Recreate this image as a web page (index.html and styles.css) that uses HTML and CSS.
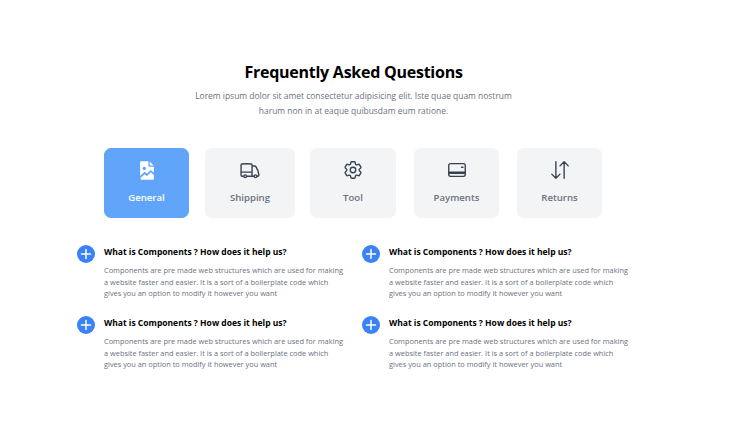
FILE: index.html
```html
<!DOCTYPE html>
<html lang="en">

<head>
    <meta charset="UTF-8">
    <meta name="viewport" content="width=device-width, initial-scale=1.0">
    <title>FAQ</title>
    <link rel="stylesheet" href="styles.css">
</head>

<body>
    <section class="faq">
        <h1>Frequently Asked Questions</h1>
        <p class="lead">Lorem ipsum dolor sit amet consectetur adipisicing elit. Iste quae quam nostrum harum non in at eaque quibusdam eum ratione.</p>

        <div class="tabs">
            <a class="tab active">
                <svg viewBox="0 0 24 24" class="icon" fill="#fff">
                    <path fill-rule="evenodd" d="M6 2.500h7.500v4.500a1.500 1.500 0 0 0 1.500 1.500h4.500V15l-3.500-3-4 4-2.500-2-5 4.500V3.500a1 1 0 0 1 1-1Zm3 6a1.800 1.800 0 1 0 0 3.600 1.800 1.800 0 0 0 0-3.600Z" />
                    <path d="M15 2.800 19.200 7H15.600a.6.6 0 0 1-.6-.6ZM5 20.500l4.500-4 2.600 2 4-4 3.400 3v4a1 1 0 0 1-1 1H6a1 1 0 0 1-1-1Z" />
                </svg>
                <span>General</span>
            </a>
            <a class="tab wide">
                <svg viewBox="0 0 24 24" class="icon" fill="none" stroke="currentColor" stroke-width="1.5" stroke-linecap="round" stroke-linejoin="round">
                    <path d="M8.250 18.750a1.500 1.500 0 0 1-3 0m3 0a1.500 1.500 0 0 0-3 0m3 0h6m-9 0H3.375a1.125 1.125 0 0 1-1.125-1.125V14.250m17.250 4.500a1.500 1.500 0 0 1-3 0m3 0a1.500 1.500 0 0 0-3 0m3 0h1.125c.621 0 1.129-.504 1.090-1.124a17.902 17.902 0 0 0-3.213-9.193 2.056 2.056 0 0 0-1.580-.86H14.250M16.500 18.750h-2.250m0-11.177v-.958c0-.568-.422-1.048-.987-1.106a48.554 48.554 0 0 0-10.026 0 1.106 1.106 0 0 0-.987 1.106v7.635m12-6.677v6.677m0 4.500v-4.500m0 0h-12" />
                </svg>
                <span>Shipping</span>
            </a>
            <a class="tab narrow">
                <svg viewBox="0 0 24 24" class="icon" fill="none" stroke="currentColor" stroke-width="1.5" stroke-linecap="round" stroke-linejoin="round">
                    <path d="M9.594 3.94c.09-.542.56-.94 1.11-.94h2.593c.55 0 1.02.398 1.11.94l.213 1.281c.063.374.313.686.645.87.074.04.147.083.22.127.325.196.72.257 1.075.124l1.217-.456a1.125 1.125 0 0 1 1.37.49l1.296 2.247a1.125 1.125 0 0 1-.26 1.431l-1.003.827c-.293.241-.438.613-.43.992a7.723 7.723 0 0 1 0 .255c-.008.378.137.75.43.991l1.004.827c.424.35.534.955.26 1.43l-1.298 2.247a1.125 1.125 0 0 1-1.369.491l-1.217-.456c-.355-.133-.75-.072-1.076.124a6.47 6.47 0 0 1-.22.128c-.331.183-.581.495-.644.869l-.213 1.281c-.09.543-.56.94-1.11.94h-2.594c-.55 0-1.019-.398-1.11-.94l-.213-1.281c-.062-.374-.312-.686-.644-.87a6.52 6.52 0 0 1-.22-.127c-.325-.196-.72-.257-1.076-.124l-1.217.456a1.125 1.125 0 0 1-1.369-.49l-1.297-2.247a1.125 1.125 0 0 1 .26-1.431l1.004-.827c.292-.24.437-.613.43-.991a6.932 6.932 0 0 1 0-.255c.007-.38-.138-.751-.43-.992l-1.004-.827a1.125 1.125 0 0 1-.26-1.43l1.297-2.247a1.125 1.125 0 0 1 1.37-.491l1.216.456c.356.133.751.072 1.076-.124.072-.044.146-.086.22-.128.332-.183.582-.495.644-.869l.214-1.28Z" />
                    <path d="M15 12a3 3 0 1 1-6 0 3 3 0 0 1 6 0Z" />
                </svg>
                <span>Tool</span>
            </a>
            <a class="tab">
                <svg viewBox="0 0 24 24" class="icon" fill="none" stroke="currentColor" stroke-width="1.5" stroke-linecap="round" stroke-linejoin="round">
                    <rect x="3" y="5" width="18" height="14" rx="2" />
                    <path d="M3 15.500h18M3 14.500h18M17 9h1.500" />
                </svg>
                <span>Payments</span>
            </a>
            <a class="tab">
                <svg viewBox="0 0 24 24" class="icon" fill="none" stroke="currentColor" stroke-width="1.5" stroke-linecap="round" stroke-linejoin="round">
                    <path d="M12 16.500 7.500 21m0 0L3 16.500M7.500 21V3M12 7.500 16.500 3m0 0L21 7.500M16.500 3v18" />
                </svg>
                <span>Returns</span>
            </a>
        </div>

        <div class="questions">
            <div class="question">
                <span class="plus"><svg viewBox="0 0 18 18" fill="none" stroke="#fff" stroke-width="1.5" stroke-linecap="round"><path d="M9 4.500v9M4.500 9h9" /></svg></span>
                <div>
                    <h2>What is Components ? How does it help us?</h2>
                    <p>Components are pre made web structures which are used for making a website faster and easier. It is a sort of a boilerplate code which gives you an option to modify it however you want</p>
                </div>
            </div>
            <div class="question">
                <span class="plus"><svg viewBox="0 0 18 18" fill="none" stroke="#fff" stroke-width="1.5" stroke-linecap="round"><path d="M9 4.500v9M4.500 9h9" /></svg></span>
                <div>
                    <h2>What is Components ? How does it help us?</h2>
                    <p>Components are pre made web structures which are used for making a website faster and easier. It is a sort of a boilerplate code which gives you an option to modify it however you want</p>
                </div>
            </div>
            <div class="question">
                <span class="plus"><svg viewBox="0 0 18 18" fill="none" stroke="#fff" stroke-width="1.5" stroke-linecap="round"><path d="M9 4.500v9M4.500 9h9" /></svg></span>
                <div>
                    <h2>What is Components ? How does it help us?</h2>
                    <p>Components are pre made web structures which are used for making a website faster and easier. It is a sort of a boilerplate code which gives you an option to modify it however you want</p>
                </div>
            </div>
            <div class="question">
                <span class="plus"><svg viewBox="0 0 18 18" fill="none" stroke="#fff" stroke-width="1.5" stroke-linecap="round"><path d="M9 4.500v9M4.500 9h9" /></svg></span>
                <div>
                    <h2>What is Components ? How does it help us?</h2>
                    <p>Components are pre made web structures which are used for making a website faster and easier. It is a sort of a boilerplate code which gives you an option to modify it however you want</p>
                </div>
            </div>
        </div>
    </section>
</body>

</html>
```
FILE: styles.css
```css
* {
    box-sizing: border-box;
}

body {
    margin: 0;
    background: #fff;
    font-family: "Open Sans", "Noto Sans", sans-serif;
}

.faq {
    width: 707px;
    padding-top: 60px;
}

h1 {
    margin: 0;
    text-align: center;
    font-size: 16px;
    line-height: 24px;
    font-weight: 700;
    letter-spacing: -0.25px;
    color: #000;
}

.lead {
    width: 330px;
    margin: 5px auto 0;
    text-align: center;
    font-size: 8.45px;
    line-height: 14.5px;
    color: #6b7280;
}

.tabs {
    display: flex;
    gap: 18px;
    margin: 30px 0 0 104px;
}

.tab {
    width: 85px;
    height: 70px;
    display: flex;
    flex-direction: column;
    align-items: center;
    padding-top: 11px;
    background: #f3f4f6;
    border-radius: 7px;
    color: #374151;
}

.tab.wide {
    width: 90px;
    margin-left: -2px;
}

.tab.narrow {
    width: 86px;
    margin-left: -3px;
}

.tab span {
    margin-top: 9px;
    font-size: 9.6px;
    line-height: 16px;
    font-weight: 600;
    color: #6b7280;
}

.tab.active {
    background: #60a5fa;
    border: 1px solid #60a5fa;
    padding-top: 10px;
}

.tab.active span {
    color: #fff;
}

.icon {
    width: 22px;
    height: 22px;
}

.questions {
    display: grid;
    grid-template-columns: 285px 285px;
    grid-auto-rows: 71px;
    margin: 27px 0 0 77px;
}

.question {
    display: flex;
    gap: 9px;
}

.plus {
    flex: none;
    width: 18px;
    height: 18px;
    border-radius: 50%;
    background: #3b82f6;
}

.plus svg {
    display: block;
}

h2 {
    margin: 0;
    font-size: 8.5px;
    line-height: 14px;
    font-weight: 700;
    color: #000;
}

.question p {
    margin: 6px 0 0;
    width: 242px;
    font-size: 7.4px;
    line-height: 11.5px;
    color: #6b7280;
}
```
